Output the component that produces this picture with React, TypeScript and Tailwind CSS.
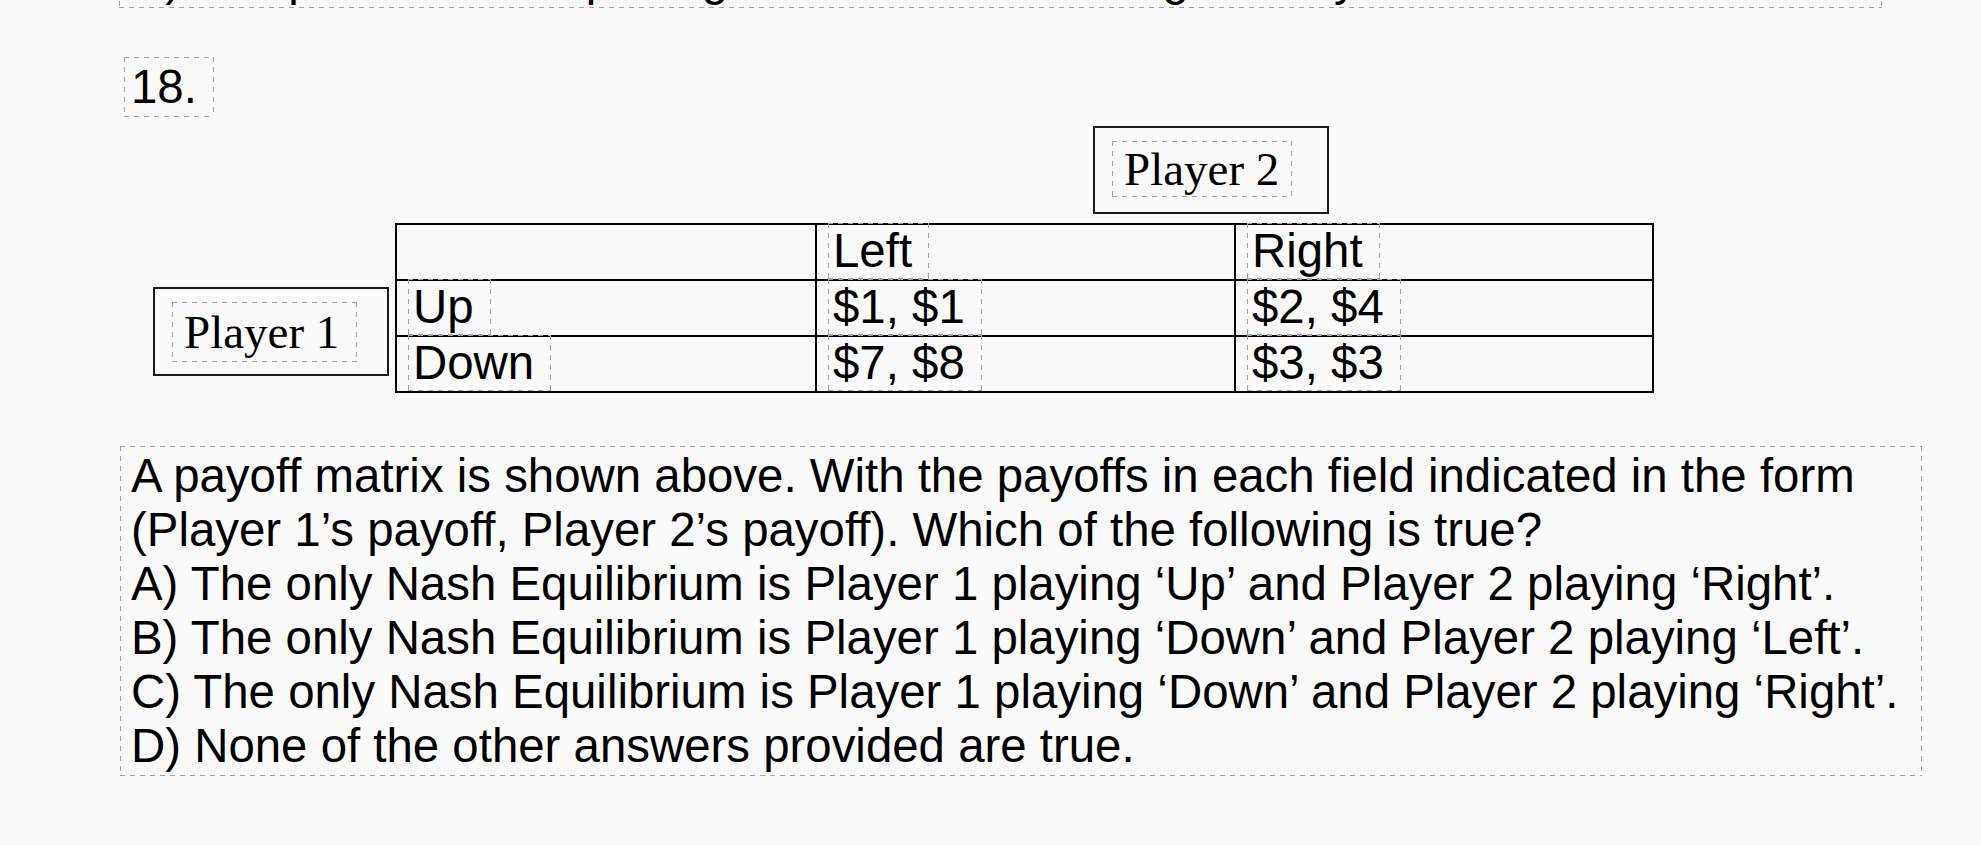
import React from "react";

const sans = "font-['Liberation_Sans',Arial,sans-serif]";
const serif = "font-['Liberation_Serif','Times_New_Roman',serif]";
const dashed =
  "border border-transparent bg-no-repeat [background-origin:border-box] [background-image:repeating-linear-gradient(90deg,#a0a0a8_0_5px,transparent_5px_10px),repeating-linear-gradient(90deg,#a0a0a8_0_5px,transparent_5px_10px),repeating-linear-gradient(180deg,#a0a0a8_0_5px,transparent_5px_10px),repeating-linear-gradient(180deg,#a0a0a8_0_5px,transparent_5px_10px)] [background-size:100%_1px,100%_1px,1px_100%,1px_100%] [background-position:0_0,0_100%,0_0,100%_0]";

function Cell({ text, first, wClass }: { text: string; first: boolean; wClass: string }) {
  return (
    <div className={`${wClass} h-[54px] ${first ? "" : "border-l-2 border-black"} flex items-start`}>
      {text ? (
        <div className={`ml-[11px] mt-[-2px] ${dashed} pl-[4px] pr-[16px] leading-[54px] whitespace-nowrap`}>
          {text}
        </div>
      ) : null}
    </div>
  );
}

export default function App() {
  const rows = [
    ["", "Left", "Right"],
    ["Up", "$1, $1", "$2, $4"],
    ["Down", "$7, $8", "$3, $3"],
  ];
  const widths = ["w-[418px]", "w-[419px]", "w-[418px]"];
  const lines = [
    "A payoff matrix is shown above. With the payoffs in each field indicated in the form",
    "(Player 1’s payoff, Player 2’s payoff). Which of the following is true?",
    "A) The only Nash Equilibrium is Player 1 playing ‘Up’ and Player 2 playing ‘Right’.",
    "B) The only Nash Equilibrium is Player 1 playing ‘Down’ and Player 2 playing ‘Left’.",
    "C) The only Nash Equilibrium is Player 1 playing ‘Down’ and Player 2 playing ‘Right’.",
    "D) None of the other answers provided are true.",
  ];
  return (
    <div className={`h-[845px] w-full overflow-hidden bg-[#fafafa] text-black ${sans} text-[47.4px] leading-[54px]`}>
      <div className="pl-[119px] flex flex-col items-start">
        {/* previous question, mostly scrolled away */}
        <div className={`mt-[-49px] w-[1763px] ${dashed} pl-[11px] pb-[1px] whitespace-nowrap`}>
          D) The prices are set price given the market is in good to yield the best outcome.
        </div>

        {/* question number */}
        <div className={`mt-[49px] ml-[5px] w-[90px] ${dashed} pl-[6px] py-[2px] whitespace-nowrap`}>
          18.
        </div>

        {/* Player 2 label */}
        <div className="mt-[9px] ml-[974px] w-[236px] h-[88px] border-2 border-[#1a1a1a] pt-[13px] pl-[17px]">
          <div className={`w-[180px] ${dashed} pl-[11px] ${serif} text-[47px] leading-[54px] whitespace-nowrap`}>
            Player 2
          </div>
        </div>

        {/* Player 1 label + matrix */}
        <div className="mt-[9px] flex items-start">
          <div className="ml-[34px] mt-[64px] w-[236px] h-[89px] border-2 border-[#1a1a1a] pt-[13px] pl-[17px]">
            <div className={`w-[185px] ${dashed} pl-[11px] py-[2px] ${serif} text-[47px] leading-[54px] whitespace-nowrap`}>
              Player 1
            </div>
          </div>
          <div className="ml-[6px] border-2 border-black flex flex-col">
            {rows.map((r, i) => (
              <div key={i} className={`flex ${i > 0 ? "border-t-2 border-black" : ""}`}>
                {r.map((c, j) => (
                  <Cell key={j} text={c} first={j === 0} wClass={widths[j]} />
                ))}
              </div>
            ))}
          </div>
        </div>

        {/* question text */}
        <div className={`mt-[53px] ml-[1px] w-[1802px] ${dashed} pl-[10px] py-[2px]`}>
          {lines.map((l, i) => (
            <div key={i} className="whitespace-nowrap">
              {l}
            </div>
          ))}
        </div>
      </div>
    </div>
  );
}
